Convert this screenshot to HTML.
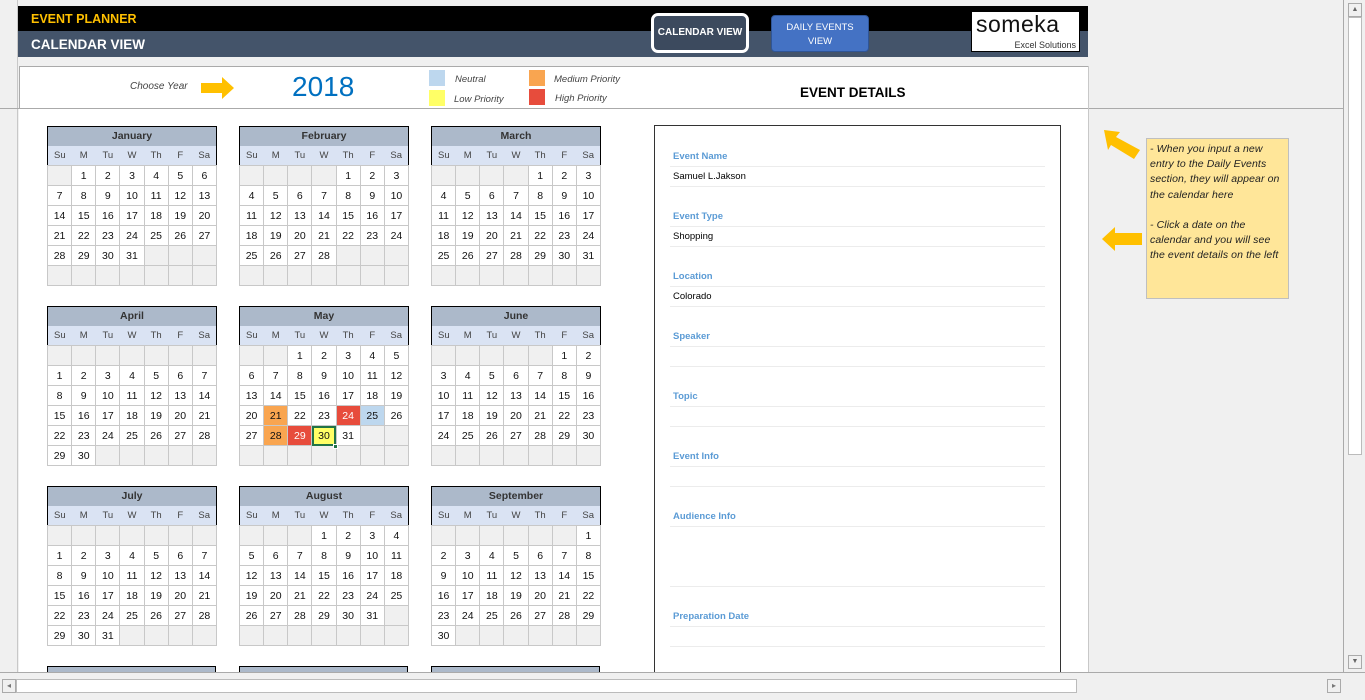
<!DOCTYPE html>
<html><head><meta charset="utf-8"><style>
*{margin:0;padding:0;box-sizing:border-box}
body{width:1365px;height:700px;overflow:hidden;background:#f0f0f0;font-family:"Liberation Sans",sans-serif;position:relative}
.a{position:absolute}
table.c{position:absolute;border-collapse:collapse;width:170px;border:1px solid #000;background:#fff;font-size:10.5px;text-align:center;table-layout:fixed}
table.c td{border:1px solid #c8c8c8;height:20px;padding:0;color:#111}
table.c td.e{background:#f0f0f0}
table.c tr.t td{background:#acb9ca;height:19px;font-weight:bold;font-size:10.5px;color:#333;border:none}
table.c tr.d td{background:#dae3f3;color:#444;font-size:9.5px;border-left:none;border-right:none;border-top:none}
.lbl{position:absolute;left:673px;color:#5b9bd5;font-size:9.5px;font-weight:bold}
.ln{position:absolute;left:670px;width:375px;height:1px;background:#ececec}
.val{position:absolute;left:673px;font-size:9.5px;color:#000}
</style></head><body>
<div class="a" style="left:0;top:0;width:18px;height:672px;border-right:1px solid #c8c8c8"></div>
<div class="a" style="left:18px;top:6px;width:1070px;height:25px;background:#000"></div>
<div class="a" style="left:18px;top:31px;width:1070px;height:26px;background:#44546a"></div>
<div class="a" style="left:31px;top:12px;color:#ffc000;font-weight:bold;font-size:12.5px">EVENT PLANNER</div>
<div class="a" style="left:31px;top:37px;color:#fff;font-weight:bold;font-size:13.5px">CALENDAR VIEW</div>
<div class="a" style="left:651px;top:13px;width:98px;height:40px;border:3px solid #fff;border-radius:7px;background:#3c4a5e;color:#fff;font-size:10px;font-weight:bold;text-align:center;line-height:34px">CALENDAR VIEW</div>
<div class="a" style="left:771px;top:15px;width:98px;height:37px;border:1px solid #2f5597;border-radius:4px;background:#4472c4;color:#fff;font-size:9.5px;text-align:center;line-height:14px;padding-top:5px">DAILY EVENTS<br>VIEW</div>
<div class="a" style="left:971px;top:11px;width:109px;height:41px;background:#fff;border:1px solid #000">
<div class="a" style="left:4px;top:-1px;font-size:23px;color:#111;letter-spacing:0.5px">someka</div>
<div class="a" style="right:3px;top:28px;font-size:9px;color:#333">Excel Solutions</div></div>
<div class="a" style="left:19px;top:66px;width:1070px;height:43px;background:#fff;border:1px solid #aaa;border-bottom:none"></div>
<div class="a" style="left:0;top:108px;width:1343px;height:1px;background:#aaa"></div>
<div class="a" style="left:19px;top:109px;width:1069px;height:563px;background:#fff"></div>
<div class="a" style="left:1088px;top:66px;width:1px;height:606px;background:#c8c8c8"></div>
<div class="a" style="left:130px;top:81px;font-size:10px;font-style:italic;color:#444">Choose Year</div>
<svg class="a" style="left:201px;top:77px" width="34" height="22"><polygon points="0,6 21,6 21,0 33,11 21,22 21,16 0,16" fill="#ffc000"/></svg>
<div class="a" style="left:292px;top:71px;font-size:28px;color:#0070c0">2018</div>
<div class="a" style="left:429px;top:70px;width:16px;height:16px;background:#bdd7ee"></div>
<div class="a" style="left:429px;top:90px;width:16px;height:16px;background:#ffff66"></div>
<div class="a" style="left:529px;top:70px;width:16px;height:16px;background:#f9a550"></div>
<div class="a" style="left:529px;top:89px;width:16px;height:16px;background:#e74c3c"></div>
<div class="a" style="left:455px;top:74px;font-size:9.5px;font-style:italic;color:#444">Neutral</div>
<div class="a" style="left:454px;top:94px;font-size:9.5px;font-style:italic;color:#444">Low Priority</div>
<div class="a" style="left:554px;top:74px;font-size:9.5px;font-style:italic;color:#444">Medium Priority</div>
<div class="a" style="left:555px;top:93px;font-size:9.5px;font-style:italic;color:#444">High Priority</div>
<div class="a" style="left:800px;top:85px;font-size:13.5px;font-weight:bold;color:#000">EVENT DETAILS</div>

<table class="c" style="left:47px;top:126px"><tr class="t"><td colspan="7">January</td></tr><tr class="d"><td>Su</td><td>M</td><td>Tu</td><td>W</td><td>Th</td><td>F</td><td>Sa</td></tr>
<tr><td class="e"></td><td>1</td><td>2</td><td>3</td><td>4</td><td>5</td><td>6</td></tr>
<tr><td>7</td><td>8</td><td>9</td><td>10</td><td>11</td><td>12</td><td>13</td></tr>
<tr><td>14</td><td>15</td><td>16</td><td>17</td><td>18</td><td>19</td><td>20</td></tr>
<tr><td>21</td><td>22</td><td>23</td><td>24</td><td>25</td><td>26</td><td>27</td></tr>
<tr><td>28</td><td>29</td><td>30</td><td>31</td><td class="e"></td><td class="e"></td><td class="e"></td></tr>
<tr><td class="e"></td><td class="e"></td><td class="e"></td><td class="e"></td><td class="e"></td><td class="e"></td><td class="e"></td></tr></table>

<table class="c" style="left:239px;top:126px"><tr class="t"><td colspan="7">February</td></tr><tr class="d"><td>Su</td><td>M</td><td>Tu</td><td>W</td><td>Th</td><td>F</td><td>Sa</td></tr>
<tr><td class="e"></td><td class="e"></td><td class="e"></td><td class="e"></td><td>1</td><td>2</td><td>3</td></tr>
<tr><td>4</td><td>5</td><td>6</td><td>7</td><td>8</td><td>9</td><td>10</td></tr>
<tr><td>11</td><td>12</td><td>13</td><td>14</td><td>15</td><td>16</td><td>17</td></tr>
<tr><td>18</td><td>19</td><td>20</td><td>21</td><td>22</td><td>23</td><td>24</td></tr>
<tr><td>25</td><td>26</td><td>27</td><td>28</td><td class="e"></td><td class="e"></td><td class="e"></td></tr>
<tr><td class="e"></td><td class="e"></td><td class="e"></td><td class="e"></td><td class="e"></td><td class="e"></td><td class="e"></td></tr></table>

<table class="c" style="left:431px;top:126px"><tr class="t"><td colspan="7">March</td></tr><tr class="d"><td>Su</td><td>M</td><td>Tu</td><td>W</td><td>Th</td><td>F</td><td>Sa</td></tr>
<tr><td class="e"></td><td class="e"></td><td class="e"></td><td class="e"></td><td>1</td><td>2</td><td>3</td></tr>
<tr><td>4</td><td>5</td><td>6</td><td>7</td><td>8</td><td>9</td><td>10</td></tr>
<tr><td>11</td><td>12</td><td>13</td><td>14</td><td>15</td><td>16</td><td>17</td></tr>
<tr><td>18</td><td>19</td><td>20</td><td>21</td><td>22</td><td>23</td><td>24</td></tr>
<tr><td>25</td><td>26</td><td>27</td><td>28</td><td>29</td><td>30</td><td>31</td></tr>
<tr><td class="e"></td><td class="e"></td><td class="e"></td><td class="e"></td><td class="e"></td><td class="e"></td><td class="e"></td></tr></table>

<table class="c" style="left:47px;top:306px"><tr class="t"><td colspan="7">April</td></tr><tr class="d"><td>Su</td><td>M</td><td>Tu</td><td>W</td><td>Th</td><td>F</td><td>Sa</td></tr>
<tr><td class="e"></td><td class="e"></td><td class="e"></td><td class="e"></td><td class="e"></td><td class="e"></td><td class="e"></td></tr>
<tr><td>1</td><td>2</td><td>3</td><td>4</td><td>5</td><td>6</td><td>7</td></tr>
<tr><td>8</td><td>9</td><td>10</td><td>11</td><td>12</td><td>13</td><td>14</td></tr>
<tr><td>15</td><td>16</td><td>17</td><td>18</td><td>19</td><td>20</td><td>21</td></tr>
<tr><td>22</td><td>23</td><td>24</td><td>25</td><td>26</td><td>27</td><td>28</td></tr>
<tr><td>29</td><td>30</td><td class="e"></td><td class="e"></td><td class="e"></td><td class="e"></td><td class="e"></td></tr></table>

<table class="c" style="left:239px;top:306px"><tr class="t"><td colspan="7">May</td></tr><tr class="d"><td>Su</td><td>M</td><td>Tu</td><td>W</td><td>Th</td><td>F</td><td>Sa</td></tr>
<tr><td class="e"></td><td class="e"></td><td>1</td><td>2</td><td>3</td><td>4</td><td>5</td></tr>
<tr><td>6</td><td>7</td><td>8</td><td>9</td><td>10</td><td>11</td><td>12</td></tr>
<tr><td>13</td><td>14</td><td>15</td><td>16</td><td>17</td><td>18</td><td>19</td></tr>
<tr><td>20</td><td style="background:#f9a550">21</td><td>22</td><td>23</td><td style="background:#e74c3c;color:#fff">24</td><td style="background:#bdd7ee">25</td><td>26</td></tr>
<tr><td>27</td><td style="background:#f9a550">28</td><td style="background:#e74c3c;color:#fff">29</td><td style="background:#ffff66;outline:2px solid #217346;outline-offset:-2px">30</td><td>31</td><td class="e"></td><td class="e"></td></tr>
<tr><td class="e"></td><td class="e"></td><td class="e"></td><td class="e"></td><td class="e"></td><td class="e"></td><td class="e"></td></tr></table>
<div class="a" style="left:333px;top:444px;width:5px;height:5px;background:#217346;border:1px solid #fff"></div>

<table class="c" style="left:431px;top:306px"><tr class="t"><td colspan="7">June</td></tr><tr class="d"><td>Su</td><td>M</td><td>Tu</td><td>W</td><td>Th</td><td>F</td><td>Sa</td></tr>
<tr><td class="e"></td><td class="e"></td><td class="e"></td><td class="e"></td><td class="e"></td><td>1</td><td>2</td></tr>
<tr><td>3</td><td>4</td><td>5</td><td>6</td><td>7</td><td>8</td><td>9</td></tr>
<tr><td>10</td><td>11</td><td>12</td><td>13</td><td>14</td><td>15</td><td>16</td></tr>
<tr><td>17</td><td>18</td><td>19</td><td>20</td><td>21</td><td>22</td><td>23</td></tr>
<tr><td>24</td><td>25</td><td>26</td><td>27</td><td>28</td><td>29</td><td>30</td></tr>
<tr><td class="e"></td><td class="e"></td><td class="e"></td><td class="e"></td><td class="e"></td><td class="e"></td><td class="e"></td></tr></table>

<table class="c" style="left:47px;top:486px"><tr class="t"><td colspan="7">July</td></tr><tr class="d"><td>Su</td><td>M</td><td>Tu</td><td>W</td><td>Th</td><td>F</td><td>Sa</td></tr>
<tr><td class="e"></td><td class="e"></td><td class="e"></td><td class="e"></td><td class="e"></td><td class="e"></td><td class="e"></td></tr>
<tr><td>1</td><td>2</td><td>3</td><td>4</td><td>5</td><td>6</td><td>7</td></tr>
<tr><td>8</td><td>9</td><td>10</td><td>11</td><td>12</td><td>13</td><td>14</td></tr>
<tr><td>15</td><td>16</td><td>17</td><td>18</td><td>19</td><td>20</td><td>21</td></tr>
<tr><td>22</td><td>23</td><td>24</td><td>25</td><td>26</td><td>27</td><td>28</td></tr>
<tr><td>29</td><td>30</td><td>31</td><td class="e"></td><td class="e"></td><td class="e"></td><td class="e"></td></tr></table>

<table class="c" style="left:239px;top:486px"><tr class="t"><td colspan="7">August</td></tr><tr class="d"><td>Su</td><td>M</td><td>Tu</td><td>W</td><td>Th</td><td>F</td><td>Sa</td></tr>
<tr><td class="e"></td><td class="e"></td><td class="e"></td><td>1</td><td>2</td><td>3</td><td>4</td></tr>
<tr><td>5</td><td>6</td><td>7</td><td>8</td><td>9</td><td>10</td><td>11</td></tr>
<tr><td>12</td><td>13</td><td>14</td><td>15</td><td>16</td><td>17</td><td>18</td></tr>
<tr><td>19</td><td>20</td><td>21</td><td>22</td><td>23</td><td>24</td><td>25</td></tr>
<tr><td>26</td><td>27</td><td>28</td><td>29</td><td>30</td><td>31</td><td class="e"></td></tr>
<tr><td class="e"></td><td class="e"></td><td class="e"></td><td class="e"></td><td class="e"></td><td class="e"></td><td class="e"></td></tr></table>

<table class="c" style="left:431px;top:486px"><tr class="t"><td colspan="7">September</td></tr><tr class="d"><td>Su</td><td>M</td><td>Tu</td><td>W</td><td>Th</td><td>F</td><td>Sa</td></tr>
<tr><td class="e"></td><td class="e"></td><td class="e"></td><td class="e"></td><td class="e"></td><td class="e"></td><td>1</td></tr>
<tr><td>2</td><td>3</td><td>4</td><td>5</td><td>6</td><td>7</td><td>8</td></tr>
<tr><td>9</td><td>10</td><td>11</td><td>12</td><td>13</td><td>14</td><td>15</td></tr>
<tr><td>16</td><td>17</td><td>18</td><td>19</td><td>20</td><td>21</td><td>22</td></tr>
<tr><td>23</td><td>24</td><td>25</td><td>26</td><td>27</td><td>28</td><td>29</td></tr>
<tr><td>30</td><td class="e"></td><td class="e"></td><td class="e"></td><td class="e"></td><td class="e"></td><td class="e"></td></tr></table>

<div class="a" style="left:47px;top:666px;width:169px;height:6px;background:#acb9ca;border:1px solid #000;border-bottom:none"></div>
<div class="a" style="left:239px;top:666px;width:169px;height:6px;background:#acb9ca;border:1px solid #000;border-bottom:none"></div>
<div class="a" style="left:431px;top:666px;width:169px;height:6px;background:#acb9ca;border:1px solid #000;border-bottom:none"></div>

<div class="a" style="left:654px;top:125px;width:407px;height:560px;border:1px solid #333;background:#fff"></div>
<div class="lbl" style="top:151px">Event Name</div><div class="ln" style="top:166px"></div><div class="val" style="top:171px">Samuel L.Jakson</div><div class="ln" style="top:186px"></div>
<div class="lbl" style="top:211px">Event Type</div><div class="ln" style="top:226px"></div><div class="val" style="top:231px">Shopping</div><div class="ln" style="top:246px"></div>
<div class="lbl" style="top:271px">Location</div><div class="ln" style="top:286px"></div><div class="val" style="top:291px">Colorado</div><div class="ln" style="top:306px"></div>
<div class="lbl" style="top:331px">Speaker</div><div class="ln" style="top:346px"></div><div class="ln" style="top:366px"></div>
<div class="lbl" style="top:391px">Topic</div><div class="ln" style="top:406px"></div><div class="ln" style="top:426px"></div>
<div class="lbl" style="top:451px">Event Info</div><div class="ln" style="top:466px"></div><div class="ln" style="top:486px"></div>
<div class="lbl" style="top:511px">Audience Info</div><div class="ln" style="top:526px"></div><div class="ln" style="top:586px"></div>
<div class="lbl" style="top:611px">Preparation Date</div><div class="ln" style="top:626px"></div><div class="ln" style="top:646px"></div>

<svg class="a" style="left:1102px;top:128px" width="40" height="34"><polygon points="2,2 18,4 14,9 38,22 32,31 9,17 6,22" fill="#ffc000"/></svg>
<svg class="a" style="left:1102px;top:226px" width="40" height="26"><polygon points="0,13 13,1 13,7 40,7 40,19 13,19 13,25" fill="#ffc000"/></svg>
<div class="a" style="left:1146px;top:138px;width:143px;height:161px;background:#ffe699;border:1px solid #bfbfbf;font-size:10.5px;font-style:italic;color:#222;line-height:15.2px;padding:3px 3px 3px 3px;letter-spacing:0.1px">- When you input a new entry to the Daily Events section, they will appear on the calendar here<br><br>- Click a date on the calendar and you will see the event details on the left</div>

<div class="a" style="left:0;top:672px;width:1365px;height:28px;background:#f0f0f0;border-top:1px solid #aaa"></div>
<div class="a" style="left:2px;top:679px;width:14px;height:14px;border:1px solid #aaa;background:#f0f0f0;font-size:8px;color:#777;text-align:center;line-height:12px">◂</div>
<div class="a" style="left:16px;top:679px;width:1061px;height:14px;background:#fff;border:1px solid #bbb"></div>
<div class="a" style="left:1327px;top:679px;width:14px;height:14px;border:1px solid #aaa;background:#f0f0f0;font-size:8px;color:#777;text-align:center;line-height:12px">▸</div>
<div class="a" style="left:1343px;top:0;width:3px;height:672px;border-left:1px solid #aaa"></div>
<div class="a" style="left:1347px;top:2px;width:16px;height:670px;background:#f0f0f0"></div>
<div class="a" style="left:1348px;top:3px;width:14px;height:14px;border:1px solid #aaa;font-size:7px;color:#666;text-align:center;line-height:12px">▲</div>
<div class="a" style="left:1348px;top:17px;width:14px;height:438px;background:#fff;border:1px solid #bbb"></div>
<div class="a" style="left:1348px;top:655px;width:14px;height:14px;border:1px solid #aaa;font-size:7px;color:#666;text-align:center;line-height:12px">▼</div>
</body></html>
